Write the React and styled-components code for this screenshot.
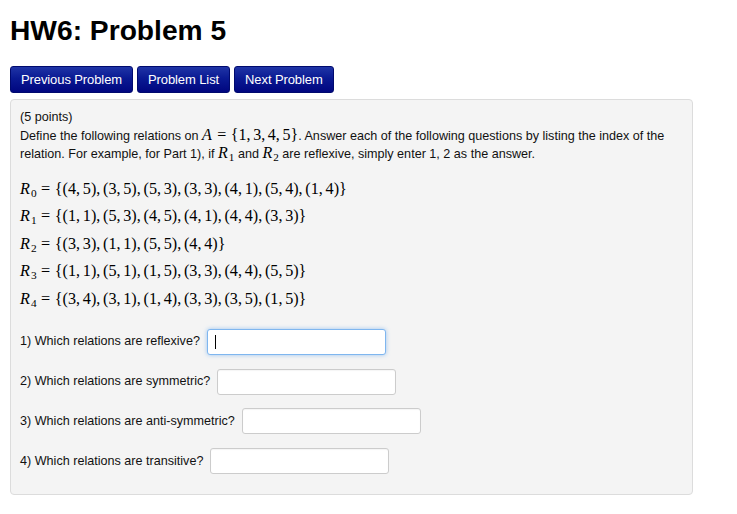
import React from "react";
import styled, { createGlobalStyle } from "styled-components";

const GlobalStyle = createGlobalStyle`
    html, body {
        margin: 0;
        padding: 0;
        background: #ffffff;
    }
    body {
        font-family: "Liberation Sans", Arial, sans-serif;
        color: #111;
    }
`

const Page = styled.div`
    width: 682px;
    padding: 0 10px;
`

const Title = styled.h1`
    margin: 14px 0 0;
    font-size: 28.2px;
    line-height: 32px;
    font-weight: bold;
    color: #000;
`

const NavBar = styled.div`
    display: flex;
    gap: 4px;
    margin-top: 20px;
`

const NavButton = styled.button`
    height: 27px;
    padding: 0 10px;
    font-family: "Liberation Sans", Arial, sans-serif;
    font-size: 13px;
    letter-spacing: -0.1px;
    color: #fff;
    background: linear-gradient(to bottom, #1f34a6 0%, #0a1a93 45%, #00067f 100%);
    border: 1px solid #000a6e;
    border-radius: 3px;
    cursor: pointer;
`

const Panel = styled.div`
    margin-top: 6px;
    box-sizing: border-box;
    width: 683px;
    background: #f4f4f4;
    border: 1px solid #dcdcdc;
    border-radius: 4px;
    padding: 8px 9px 20px;
    font-size: 12.6px;
    line-height: 18.6px;
    color: #111;
`

const Para = styled.p`
    margin: 0;
`

const MathLines = styled.div`
    display: flex;
    flex-direction: column;
    gap: 7.5px;
    margin-top: 15px;
`

const MathLine = styled.div`
    font-family: "Liberation Serif", "Times New Roman", serif;
    font-size: 16.2px;
    line-height: 20px;
    color: #000;
    white-space: nowrap;
`

const InlineMath = styled.span`
    font-family: "Liberation Serif", "Times New Roman", serif;
    font-size: 16px;
    line-height: 0;
    color: #000;
`

const Var = styled.i`
    font-style: italic;
    margin-right: 1px;
`

const Sub = styled.sub`
    font-size: 0.7em;
    font-style: normal;
    vertical-align: -0.25em;
    line-height: 0;
`

const Rel = styled.span`
    margin: 0 0.28em;
`

const Comma = styled.span`
    margin-right: 0.167em;
`

const Questions = styled.div`
    display: flex;
    flex-direction: column;
    gap: 13.8px;
    margin-top: 20px;
`

const QuestionRow = styled.label`
    display: flex;
    align-items: center;
    gap: 7px;
`

const AnswerInput = styled.input`
    box-sizing: border-box;
    width: 179px;
    height: 26px;
    padding: 0 6px;
    font-family: "Liberation Sans", Arial, sans-serif;
    font-size: 13px;
    background: #fff;
    border: 1px solid ${(p) => (p.$focused ? "#7fb6ef" : "#cccccc")};
    border-radius: 3px;
    box-shadow: ${(p) =>
        p.$focused
            ? "0 0 4px rgba(82, 156, 236, 0.55)"
            : "inset 0 1px 1px rgba(0, 0, 0, 0.04)"};
    outline: none;
`

const Caret = styled.span`
    position: absolute;
    left: 8px;
    top: 6px;
    width: 1px;
    height: 14px;
    background: #000;
`

const InputWrap = styled.span`
    position: relative;
    display: inline-flex;
`

const relations = [
    [[4, 5], [3, 5], [5, 3], [3, 3], [4, 1], [5, 4], [1, 4]],
    [[1, 1], [5, 3], [4, 5], [4, 1], [4, 4], [3, 3]],
    [[3, 3], [1, 1], [5, 5], [4, 4]],
    [[1, 1], [5, 1], [1, 5], [3, 3], [4, 4], [5, 5]],
    [[3, 4], [3, 1], [1, 4], [3, 3], [3, 5], [1, 5]],
]

const questions = [
    "1) Which relations are reflexive?",
    "2) Which relations are symmetric?",
    "3) Which relations are anti-symmetric?",
    "4) Which relations are transitive?",
]

const R = ({ i }) => (
    <>
        <Var>R</Var>
        <Sub>{i}</Sub>
    </>
)

const Relation = ({ index, pairs }) => (
    <MathLine>
        <R i={index} />
        <Rel>=</Rel>
        {"{"}
        {pairs.map(([a, b], k) => (
            <React.Fragment key={k}>
                ({a}
                <Comma>,</Comma>
                {b})
                {k < pairs.length - 1 ? <Comma>,</Comma> : null}
            </React.Fragment>
        ))}
        {"}"}
    </MathLine>
)

const App = () => {
    return (
        <Page>
            <GlobalStyle />
            <Title>HW6: Problem 5</Title>
            <NavBar>
                <NavButton>Previous Problem</NavButton>
                <NavButton>Problem List</NavButton>
                <NavButton>Next Problem</NavButton>
            </NavBar>
            <Panel>
                <Para>(5 points)</Para>
                <Para>
                    Define the following relations on{" "}
                    <InlineMath>
                        <Var>A</Var>
                        <Rel>=</Rel>
                        {"{"}1<Comma>,</Comma>3<Comma>,</Comma>4<Comma>,</Comma>5{"}"}
                    </InlineMath>
                    . Answer each of the following questions by listing the index of the
                    relation. For example, for Part 1), if{" "}
                    <InlineMath>
                        <R i={1} />
                    </InlineMath>{" "}
                    and{" "}
                    <InlineMath>
                        <R i={2} />
                    </InlineMath>{" "}
                    are reflexive, simply enter 1, 2 as the answer.
                </Para>
                <MathLines>
                    {relations.map((pairs, i) => (
                        <Relation key={i} index={i} pairs={pairs} />
                    ))}
                </MathLines>
                <Questions>
                    {questions.map((q, i) => (
                        <QuestionRow key={i}>
                            {q}
                            <InputWrap>
                                <AnswerInput type="text" $focused={i === 0} />
                                {i === 0 ? <Caret /> : null}
                            </InputWrap>
                        </QuestionRow>
                    ))}
                </Questions>
            </Panel>
        </Page>
    );
};

export default App;
